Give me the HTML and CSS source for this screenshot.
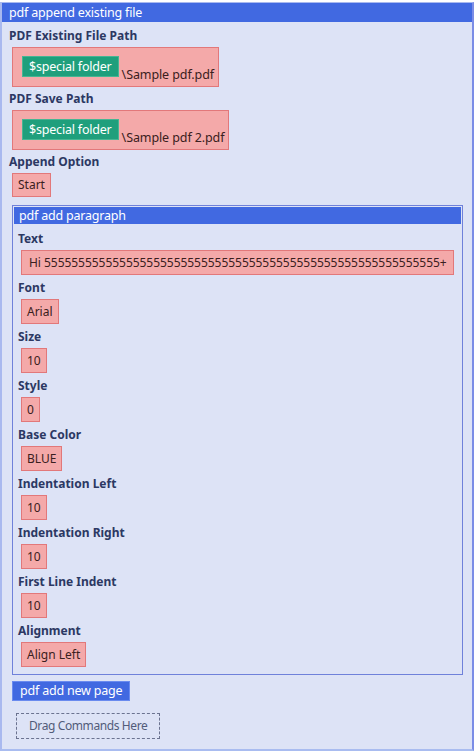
FILE: index.html
```html
<!DOCTYPE html>
<html>
<head>
<meta charset="utf-8">
<link rel="stylesheet" href="styles.css">
</head>
<body>
<div class="cmd outer">
  <div class="cmd-head">pdf append existing file</div>
  <div class="cmd-body">
    <div class="label">PDF Existing File Path</div>
    <div class="path-box"><span class="chip">$special folder</span><span class="path">\Sample pdf.pdf</span></div>
    <div class="label">PDF Save Path</div>
    <div class="path-box"><span class="chip">$special folder</span><span class="path">\Sample pdf 2.pdf</span></div>
    <div class="label">Append Option</div>
    <div class="val short">Start</div>

    <div class="cmd inner">
      <div class="cmd-head">pdf add paragraph</div>
      <div class="cmd-body inner-body">
        <div class="label">Text</div>
        <div class="val wide">Hi 5555555555555555555555555555555555555555555555555555555555+</div>
        <div class="label">Font</div>
        <div class="val">Arial</div>
        <div class="label">Size</div>
        <div class="val">10</div>
        <div class="label">Style</div>
        <div class="val">0</div>
        <div class="label">Base Color</div>
        <div class="val">BLUE</div>
        <div class="label">Indentation Left</div>
        <div class="val">10</div>
        <div class="label">Indentation Right</div>
        <div class="val">10</div>
        <div class="label">First Line Indent</div>
        <div class="val">10</div>
        <div class="label">Alignment</div>
        <div class="val">Align Left</div>
      </div>
    </div>

    <div class="btn">pdf add new page</div>
    <div class="drop">Drag Commands Here</div>
  </div>
</div>
</body>
</html>
```
FILE: styles.css
```css
html, body {
  margin: 0;
  padding: 0;
  background: #ffffff;
}
body {
  font-family: "Noto Sans", "Open Sans", sans-serif;
  font-size: 12px;
  padding-top: 2px;
}
.cmd {
  background: #dde3f6;
  display: flex;
  flex-direction: column;
  align-items: flex-start;
}
.outer {
  width: 470px;
  border-left: 2px solid #a9b9ef;
  border-right: 2px solid #7b8de6;
  border-top: 1px solid #a9b9ef;
  border-bottom: 2px solid #a9bcf0;
}
.cmd-head {
  align-self: stretch;
  background: #4169e1;
  color: #ffffff;
  font-size: 12.5px;
  letter-spacing: -0.2px;
  height: 19px;
  line-height: 19px;
  padding-left: 7px;
}
.cmd-body {
  display: flex;
  flex-direction: column;
  align-items: flex-start;
  padding: 5px 0 10px 7px;
}
.label {
  font-weight: 700;
  color: #2c3863;
  font-size: 12px;
  line-height: 18px;
  height: 18px;
  margin-bottom: 2px;
}
.path-box {
  margin-left: 3px;
  display: flex;
  align-items: flex-end;
  background: #f4a9a9;
  border: 1px solid #e2787a;
  padding: 8px 4px 3px 9px;
  margin-bottom: 3px;
}
.chip {
  background: #1f9f7c;
  border: 1px solid #46b593;
  color: #ffffff;
  height: 19px;
  line-height: 19px;
  padding: 0 6px;
  margin-bottom: 6px;
  font-size: 12.5px;
  letter-spacing: -0.2px;
}
.path {
  color: #3a2020;
  line-height: 16px;
  font-size: 12.5px;
  letter-spacing: -0.1px;
  margin-left: 3px;
}
.val {
  margin-left: 3px;
  background: #f4a9a9;
  border: 1px solid #e2787a;
  color: #3a2020;
  height: 23px;
  line-height: 23px;
  padding: 0 5px;
  margin-bottom: 4px;
  white-space: nowrap;
}
.short {
  height: 22px;
  line-height: 22px;
}
.inner {
  margin-top: 4px;
  margin-left: 3px;
  width: 449px;
  border: 1px solid #6f81da;
  align-self: flex-start;
}
.inner .cmd-head {
  margin: 1px 1px 0 1px;
  height: 17px;
  line-height: 17px;
  padding-left: 5px;
}
.inner-body {
  padding: 6px 0 3px 5px;
  align-self: stretch;
}
.wide {
  align-self: stretch;
  margin-right: 8px;
  padding-left: 7px;
  letter-spacing: -0.04px;
  overflow: hidden;
}
.btn {
  margin-top: 6px;
  margin-left: 3px;
  background: #4169e1;
  border: 1px solid #6a8bef;
  color: #ffffff;
  font-size: 12.5px;
  letter-spacing: -0.2px;
  height: 18px;
  line-height: 18px;
  padding: 0 7px;
}
.drop {
  margin-top: 12px;
  margin-left: 7px;
  border: 1px dashed #6b7390;
  color: #525c7a;
  height: 24px;
  line-height: 24px;
  padding: 0 12px;
  letter-spacing: -0.4px;
}
```
